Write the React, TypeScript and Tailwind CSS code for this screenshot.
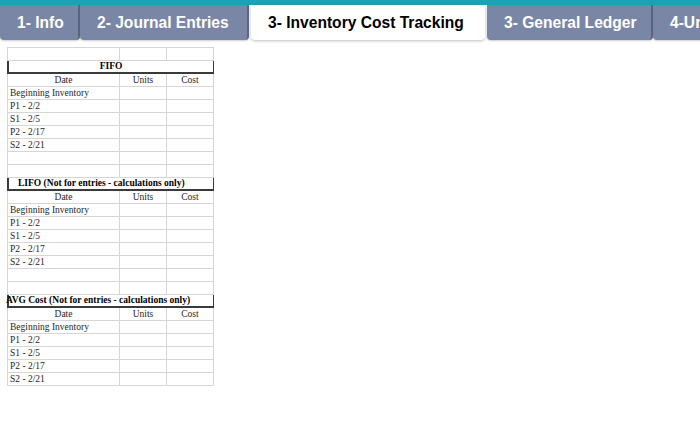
import React from 'react'

const tabs = [
  { label: '1- Info', width: 'w-[80px]', active: false },
  { label: '2- Journal Entries', width: 'w-[169px]', active: false },
  { label: '3- Inventory Cost Tracking', width: 'w-[234px]', active: true },
  { label: '3- General Ledger', width: 'w-[166px]', active: false },
  { label: '4-Unadjusted Trial Balance', width: 'w-[200px]', active: false },
]

const dates = ['Beginning Inventory', 'P1 - 2/2', 'S1 - 2/5', 'P2 - 2/17', 'S2 - 2/21']

function BlankRow() {
  return (
    <div className="grid grid-cols-[112px_47px_47px] h-[13px]">
      <div className="border-r border-b border-[#d6d6d6]" />
      <div className="border-r border-b border-[#d6d6d6]" />
      <div className="border-r border-b border-[#d6d6d6]" />
    </div>
  )
}

function TextRow({ label }: { label: string }) {
  return (
    <div className="grid grid-cols-[112px_47px_47px] h-[13px]">
      <div className="border-r border-b border-[#d6d6d6] pl-[2px] leading-[12px] whitespace-nowrap">{label}</div>
      <div className="border-r border-b border-[#d6d6d6]" />
      <div className="border-r border-b border-[#d6d6d6]" />
    </div>
  )
}

function HeadRow() {
  return (
    <div className="grid grid-cols-[112px_47px_47px] h-[13px] text-center leading-[12px]">
      <div className="border-r border-b border-[#d6d6d6]">Date</div>
      <div className="border-r border-b border-[#d6d6d6]">Units</div>
      <div className="border-r border-b border-[#d6d6d6]">Cost</div>
    </div>
  )
}

function Title({ text, align }: { text: string; align: string }) {
  return (
    <div className="h-[13px] -ml-px w-[207px] border-l-2 border-b-2 border-r border-[#3a3a3a] font-bold text-[9.5px] leading-[11px] whitespace-nowrap text-black flex">
      <span className={align}>{text}</span>
    </div>
  )
}

function Section({ title, align }: { title: string; align: string }) {
  return (
    <>
      <Title text={title} align={align} />
      <HeadRow />
      {dates.map((d) => (
        <TextRow key={d} label={d} />
      ))}
    </>
  )
}

export default function App() {
  return (
    <div className="w-[700px] h-[425px] bg-white overflow-hidden" style={{ fontFamily: '"Liberation Sans", Arial, sans-serif' }}>
      <div className="h-[5px] bg-[#1ba2b6]" />
      <div className="flex h-[35px] whitespace-nowrap">
        {tabs.map((t) => (
          <div
            key={t.label}
            className={`${t.width} shrink-0 flex items-center pl-[17px] text-[15.6px] font-bold rounded-b-[4px] ${
              t.active
                ? 'bg-white text-black shadow-[0_1px_3px_rgba(0,0,0,0.25)] mx-[2px] pl-[16px]'
                : 'bg-[#7a86a5] text-white border-r-2 border-[#5d6785] shadow-[0_1px_2px_rgba(0,0,0,0.2)]'
            }`}
          >
            {t.label}
          </div>
        ))}
      </div>
      <div
        className="mt-[7px] ml-[7px] w-[207px] border-l border-t border-[#d6d6d6] text-[9.5px] text-[#262626]"
        style={{ fontFamily: '"Liberation Serif", "Times New Roman", serif' }}
      >
        <BlankRow />
        <Title text="FIFO" align="mx-auto" />
        <HeadRow />
        {dates.map((d) => (
          <TextRow key={d} label={d} />
        ))}
        <BlankRow />
        <BlankRow />
        <Section title="LIFO (Not for entries - calculations only)" align="pl-[9px]" />
        <BlankRow />
        <BlankRow />
        <Section title="AVG Cost (Not for entries - calculations only)" align="-ml-[3px]" />
      </div>
    </div>
  )
}
